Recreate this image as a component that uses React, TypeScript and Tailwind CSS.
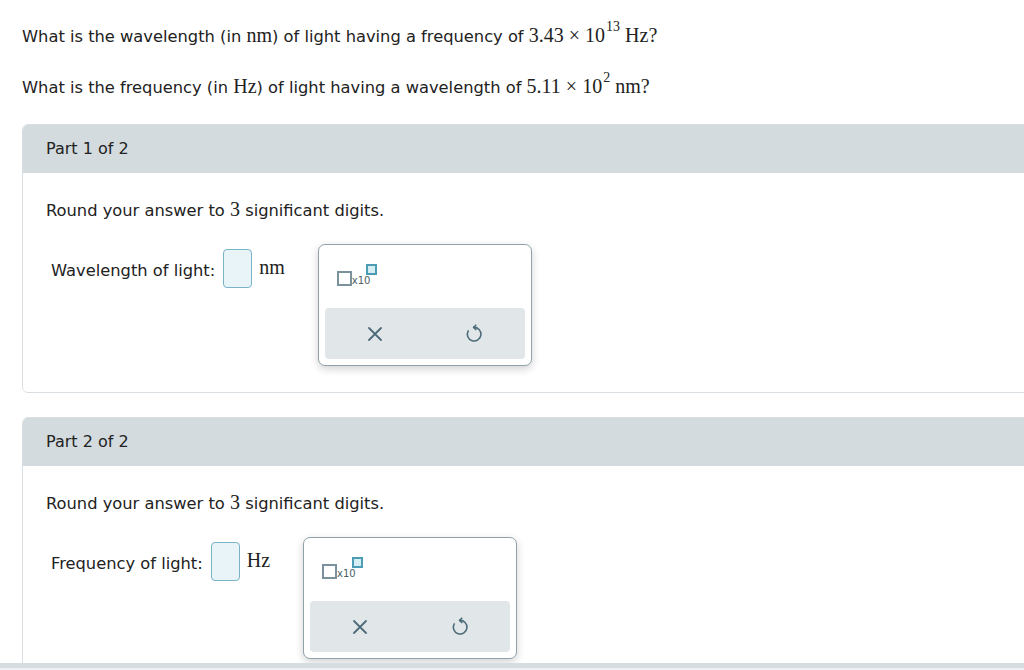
import React from "react";

const sans = "font-['DejaVu_Sans',Verdana,sans-serif]";
const serif = "font-['Liberation_Serif','Times_New_Roman',serif]";

function UndoIcon() {
  return (
    <svg width="21" height="21" viewBox="0 0 24 24" fill="none" stroke="#4c6b79" strokeWidth="1.8" strokeLinecap="round" strokeLinejoin="round">
      <path d="M11 5 A7.8 7.8 0 1 1 4.8 9" />
      <path d="M13.5 2.5 L11 5 L13.5 7.5" />
    </svg>
  );
}

function XIcon() {
  return (
    <svg width="16" height="16" viewBox="0 0 16 16" fill="none" stroke="#4c6b79" strokeWidth="1.8" strokeLinecap="round">
      <path d="M2 2 L14 14 M14 2 L2 14" />
    </svg>
  );
}

function Keypad() {
  return (
    <div className="w-[214px] h-[122px] shrink-0 rounded-[7px] border border-[#8fa1aa] bg-white shadow-[0_3px_8px_rgba(0,0,0,0.18)] px-[6px] pt-[10px] pb-[6px] flex flex-col">
      <div className="flex items-end h-[31px] pl-[12px]">
        <span className="block w-[15px] h-[15px] border-2 border-[#7b929c] bg-white" />
        <span className={`${sans} text-[10px] leading-none text-[#4a5f68]`}>x10</span>
        <span className="block w-[11px] h-[11px] border-2 border-[#4b9cb4] bg-[#d6edf3] self-start -ml-[4px] mt-[9px]" />
      </div>
      <div className="mt-auto h-[51px] rounded-[4px] bg-[#e1e6e9] flex items-center">
        <div className="flex-1 flex justify-center"><XIcon /></div>
        <div className="flex-1 flex justify-center"><UndoIcon /></div>
      </div>
    </div>
  );
}

function Part({ n, label, unit }: { n: number; label: string; unit: string }) {
  return (
    <div className="w-[1040px] rounded-[6px] border border-[#d8dee2] overflow-hidden">
      <div className="h-[48px] bg-[#d3dbdf] flex items-center px-[23px]">
        <span className={`${sans} text-[16px] text-[#222]`}>Part {n} of 2</span>
      </div>
      <div className="bg-white px-[23px] pt-[24px] pb-[26px]">
        <p className={`${sans} text-[16.3px] leading-[24px] text-[#222]`}>
          Round your answer to <span className={`${serif} text-[20px]`}>3</span> significant digits.
        </p>
        <div className="flex items-start mt-[21px]">
          <div className="flex items-center mt-[5px] pl-[5px]">
            <span className={`${sans} text-[16.3px] text-[#222] relative top-[3px]`}>{label}</span>
            <span className="ml-[8px] block w-[29px] h-[39px] rounded-[4px] border-[1.5px] border-[#79b3c8] bg-[#e8f4f8]" />
            <span className={`${serif} text-[20px] text-[#222] ml-[7px] -mt-[3px]`}>{unit}</span>
          </div>
          <div className="ml-[33px]">
            <Keypad />
          </div>
        </div>
      </div>
    </div>
  );
}

export default function App() {
  return (
    <div className="w-[1024px] h-[670px] overflow-hidden bg-white relative">
      <div className="pl-[22px] pt-[19px]">
        <p className={`${sans} text-[16.3px] text-[#222] leading-[32px] h-[32px]`}>
          What is the wavelength (in <span className={`${serif} text-[20px]`}>nm</span>) of light having a frequency of{" "}
          <span className={`${serif} text-[20px]`}>
            3.43<span className="mx-[5px]">×</span>10<span className="text-[14px] relative -top-[11px] ml-[1px] align-baseline">13</span> Hz?
          </span>
        </p>
        <p className={`${sans} text-[16.3px] text-[#222] leading-[32px] h-[32px] mt-[19px]`}>
          What is the frequency (in <span className={`${serif} text-[20px]`}>Hz</span>) of light having a wavelength of{" "}
          <span className={`${serif} text-[20px]`}>
            5.11<span className="mx-[5px]">×</span>10<span className="text-[14px] relative -top-[11px] ml-[1px] align-baseline">2</span> nm?
          </span>
        </p>
        <div className="mt-[22px] flex flex-col gap-[24px]">
          <Part n={1} label="Wavelength of light:" unit="nm" />
          <Part n={2} label="Frequency of light:" unit="Hz" />
        </div>
      </div>
      <div className="absolute left-0 right-0 bottom-0 h-[7px] bg-[#eef1f3] border-t-[5px] border-[#d5dde1]" />
    </div>
  );
}
